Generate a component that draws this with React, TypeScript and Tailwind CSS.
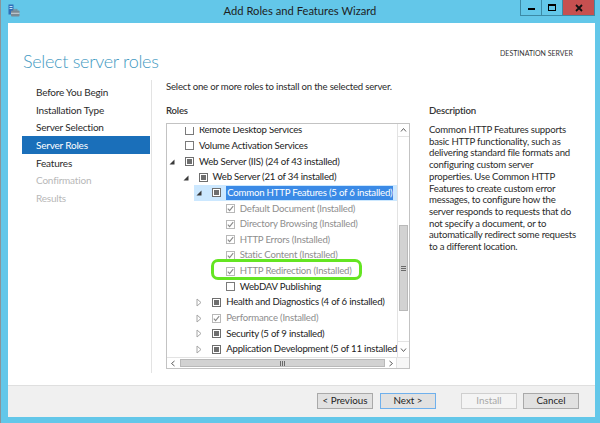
import React from "react";

type Row = {
  text: string;
  level: 0 | 1 | 2 | 3;
  exp: "open" | "closed" | null;
  check: "empty" | "partial" | "checked";
  gray?: boolean;
  selected?: boolean;
};

const rows: Row[] = [
  { text: "Remote Desktop Services", level: 0, exp: null, check: "empty" },
  { text: "Volume Activation Services", level: 0, exp: null, check: "empty" },
  { text: "Web Server (IIS) (24 of 43 installed)", level: 0, exp: "open", check: "partial" },
  { text: "Web Server (21 of 34 installed)", level: 1, exp: "open", check: "partial" },
  { text: "Common HTTP Features (5 of 6 installed)", level: 2, exp: "open", check: "partial", selected: true },
  { text: "Default Document (Installed)", level: 3, exp: null, check: "checked", gray: true },
  { text: "Directory Browsing (Installed)", level: 3, exp: null, check: "checked", gray: true },
  { text: "HTTP Errors (Installed)", level: 3, exp: null, check: "checked", gray: true },
  { text: "Static Content (Installed)", level: 3, exp: null, check: "checked", gray: true },
  { text: "HTTP Redirection (Installed)", level: 3, exp: null, check: "checked", gray: true },
  { text: "WebDAV Publishing", level: 3, exp: null, check: "empty" },
  { text: "Health and Diagnostics (4 of 6 installed)", level: 2, exp: "closed", check: "partial" },
  { text: "Performance (Installed)", level: 2, exp: "closed", check: "checked", gray: true },
  { text: "Security (5 of 9 installed)", level: 2, exp: "closed", check: "partial" },
  { text: "Application Development (5 of 11 installed)", level: 2, exp: "closed", check: "partial" },
];

const indent = ["pl-[0px]", "pl-[13.6px]", "pl-[27.2px]", "pl-[40.8px]"];

const navItems: { label: string; state: "normal" | "active" | "disabled" }[] = [
  { label: "Before You Begin", state: "normal" },
  { label: "Installation Type", state: "normal" },
  { label: "Server Selection", state: "normal" },
  { label: "Server Roles", state: "active" },
  { label: "Features", state: "normal" },
  { label: "Confirmation", state: "disabled" },
  { label: "Results", state: "disabled" },
];

const descLines = [
  "Common HTTP Features supports",
  "basic HTTP functionality, such as",
  "delivering standard file formats and",
  "configuring custom server",
  "properties. Use Common HTTP",
  "Features to create custom error",
  "messages, to configure how the",
  "server responds to requests that do",
  "not specify a document, or to",
  "automatically redirect some requests",
  "to a different location.",
];

function Expander({ exp }: { exp: Row["exp"] }) {
  return (
    <div className="w-[18px] h-full flex items-center">
      {exp === "open" && (
        <svg width="6" height="6" viewBox="0 0 6 6" className="ml-[2px] mt-[1px]">
          <polygon points="5.5,0.5 5.5,5.5 0.5,5.5" fill="#3a3a3a" />
        </svg>
      )}
      {exp === "closed" && (
        <svg width="6" height="9" viewBox="0 0 6 9" className="ml-[2px]">
          <polygon points="1,1 5,4.5 1,8" fill="none" stroke="#a6a6a6" strokeWidth="1" />
        </svg>
      )}
    </div>
  );
}

function Check({ check }: { check: Row["check"] }) {
  if (check === "empty") {
    return <div className="w-[9px] h-[9px] shrink-0 border border-[#7a7a7a] bg-white" />;
  }
  if (check === "partial") {
    return (
      <div className="w-[9px] h-[9px] shrink-0 border border-[#6e6e6e] bg-white flex items-center justify-center">
        <div className="w-[5px] h-[5px] bg-[#6e6e6e]" />
      </div>
    );
  }
  return (
    <div className="w-[9px] h-[9px] shrink-0 border border-[#b8b8b8] bg-white flex items-center justify-center">
      <svg width="7" height="7" viewBox="0 0 7 7">
        <polyline points="0.8,3.6 2.6,5.6 6.2,1.2" fill="none" stroke="#8a8a8a" strokeWidth="1.1" />
      </svg>
    </div>
  );
}

function Chevron({ dir }: { dir: "up" | "down" | "left" | "right" }) {
  const pts =
    dir === "up"
      ? "1,4.5 3.5,1.5 6,4.5"
      : dir === "down"
      ? "1,1.5 3.5,4.5 6,1.5"
      : dir === "left"
      ? "4.5,1 1.5,3.5 4.5,6"
      : "1.5,1 4.5,3.5 1.5,6";
  const w = dir === "up" || dir === "down" ? 7 : 6;
  const h = dir === "up" || dir === "down" ? 6 : 7;
  return (
    <svg width={w} height={h} viewBox={`0 0 ${w} ${h}`}>
      <polyline points={pts} fill="none" stroke="#606060" strokeWidth="1" />
    </svg>
  );
}

function WinBtn({ children, wide, red }: { children: React.ReactNode; wide?: boolean; red?: boolean }) {
  return (
    <div
      className={
        "h-[16px] flex items-center justify-center border-b border-l border-[#3c8aa6] " +
        (wide ? "w-[33px] border-r " : "w-[21px] ") +
        (red ? "bg-[#c75050]" : "bg-[#63c7e9]")
      }
    >
      {children}
    </div>
  );
}

function Button({ label, variant }: { label: string; variant: "normal" | "focus" | "disabled" }) {
  const cls =
    variant === "disabled"
      ? "bg-[#f4f4f4] border-[#cfcfcf] text-[#a8a8a8]"
      : variant === "focus"
      ? "bg-[#e1e1e1] border-[#6fb0ec] text-[#1e1e1e]"
      : "bg-[#e1e1e1] border-[#a9a9a9] text-[#1e1e1e]";
  return (
    <div className={"w-[56px] h-[16px] border flex items-center justify-center text-[9.8px] leading-none " + cls}>
      {label}
    </div>
  );
}

export default function App() {
  return (
    <div className="w-[600px] h-[423px] flex bg-[#63c7e9] overflow-hidden font-['Lato','Noto_Sans',sans-serif] select-none">
      <div className="w-[1px] bg-[#8a9499]" />
      <div className="flex-1 flex flex-col">
        {/* Title bar */}
        <div className="h-[23px] grid grid-cols-[79px_1fr_80px]">
          <div className="pl-[7px] pt-[4px]">
            <svg width="12" height="13" viewBox="0 0 12 13">
              <rect x="0.5" y="0.5" width="5" height="10" fill="#2f6fb8" />
              <rect x="1.5" y="2" width="3" height="1" fill="#bfe0f5" />
              <rect x="1.5" y="4" width="3" height="1" fill="#bfe0f5" />
              <rect x="3" y="6.5" width="8.5" height="6" rx="0.8" fill="#7b8a94" />
              <rect x="5.5" y="5.3" width="3.5" height="1.4" fill="none" stroke="#7b8a94" strokeWidth="0.8" />
              <rect x="3" y="8.8" width="8.5" height="0.9" fill="#d6dde2" />
            </svg>
          </div>
          <div className="flex items-center justify-center text-[11.2px] text-[#1e1e1e] leading-none pb-[1px]">
            Add Roles and Features Wizard
          </div>
          <div className="flex justify-end items-start pr-[5px]">
            <WinBtn>
              <div className="w-[7px] h-[2px] bg-black mt-[3px]" />
            </WinBtn>
            <WinBtn>
              <div className="w-[8px] h-[7px] border border-black border-t-2" />
            </WinBtn>
            <WinBtn wide red>
              <svg width="8" height="8" viewBox="0 0 8 8">
                <path d="M1 1 L7 7 M7 1 L1 7" stroke="#111" strokeWidth="1.8" />
              </svg>
            </WinBtn>
          </div>
        </div>

        {/* Body */}
        <div className="flex-1 flex pl-[7px] pr-[5px] pb-[6px]">
          <div className="flex-1 flex flex-col bg-white">
            {/* Header */}
            <div className="h-[57px] flex justify-between items-start">
              <div className="pl-[15px] pt-[26px] text-[18px] leading-[24px] font-light tracking-[-0.3px] text-[#449ac2]">
                Select server roles
              </div>
              <div className="pr-[22px] pt-[25px] text-[7px] leading-[10px] text-[#333]">
                DESTINATION SERVER
              </div>
            </div>

            {/* Main */}
            <div className="flex-1 flex">
              {/* Nav */}
              <div className="w-[144px] border-r border-[#e3e3e3] pt-[3px] mb-[12px]">
                {navItems.map((n) => (
                  <div
                    key={n.label}
                    className={
                      "ml-[14px] w-[128px] h-[17.7px] flex items-center pl-[14px] text-[10px] tracking-[-0.2px] leading-none " +
                      (n.state === "active"
                        ? "bg-[#1a6fba] text-white"
                        : n.state === "disabled"
                        ? "text-[#b8b8b8]"
                        : "text-[#2b2b2b]")
                    }
                  >
                    {n.label}
                  </div>
                ))}
              </div>

              {/* Content */}
              <div className="flex-1 pl-[14px] pt-[1px] text-[9.6px] tracking-[-0.2px]">
                <div className="leading-[12px] text-[#2b2b2b]">
                  Select one or more roles to install on the selected server.
                </div>
                <div className="flex">
                  {/* Roles column */}
                  <div className="w-[244px]">
                    <div className="mt-[12px] leading-[12px] font-semibold text-[#333]">Roles</div>
                    <div className="mt-[6px] h-[246px] border border-[#c3c3c3] flex flex-col bg-white">
                      <div className="flex-1 flex min-h-0">
                        <div className="flex-1 relative overflow-hidden mt-[2.5px]">
                          <div className="-mt-[4px]">
                            {rows.map((r) => (
                              <div key={r.text} className={"h-[15.65px] flex " + indent[r.level]}>
                                <div className={"flex-1 flex items-center " + (r.selected ? "bg-[#cce8ff]" : "")}>
                                  <Expander exp={r.exp} />
                                  <Check check={r.check} />
                                  <span
                                    className={
                                      "ml-[5px] whitespace-nowrap leading-[14px] " +
                                      (r.selected
                                        ? "bg-[#3b8ae6] text-white pl-[1px] pr-[1px]"
                                        : r.gray
                                        ? "text-[#8e8e8e]"
                                        : "text-[#222]")
                                    }
                                  >
                                    {r.text}
                                  </span>
                                </div>
                              </div>
                            ))}
                          </div>
                          {/* annotation highlight */}
                          <div className="absolute left-[44px] top-[132.5px] w-[151px] h-[21px] border-[3px] border-[#64e522] rounded-[7px]" />
                        </div>
                        {/* Vertical scrollbar */}
                        <div className="w-[12px] border-l border-[#e3e3e3] flex flex-col">
                          <div className="h-[13px] flex items-center justify-center border-b border-[#e3e3e3]">
                            <Chevron dir="up" />
                          </div>
                          <div className="flex-1 px-[1px]">
                            <div className="mt-[88px] h-[86px] bg-[#d2d2d2] border border-[#b9b9b9] flex flex-col items-center justify-center gap-[1px]">
                              <div className="w-[5px] h-[1px] bg-[#6a6a6a]" />
                              <div className="w-[5px] h-[1px] bg-[#6a6a6a]" />
                              <div className="w-[5px] h-[1px] bg-[#6a6a6a]" />
                            </div>
                          </div>
                          <div className="h-[16px] flex items-center justify-center border-t border-[#e3e3e3]">
                            <Chevron dir="down" />
                          </div>
                        </div>
                      </div>
                      {/* Horizontal scrollbar */}
                      <div className="h-[11px] flex border-t border-[#e3e3e3]">
                        <div className="w-[12px] flex items-center justify-center">
                          <Chevron dir="left" />
                        </div>
                        <div className="flex-1 py-[1px] pl-[1px]">
                          <div className="h-full bg-[#d2d2d2] border border-[#b9b9b9] flex items-center justify-center gap-[1px]">
                            <div className="w-[1px] h-[5px] bg-[#6a6a6a]" />
                            <div className="w-[1px] h-[5px] bg-[#6a6a6a]" />
                            <div className="w-[1px] h-[5px] bg-[#6a6a6a]" />
                          </div>
                        </div>
                        <div className="w-[11px] flex items-center justify-center">
                          <Chevron dir="right" />
                        </div>
                        <div className="w-[13px] border-l border-[#e3e3e3] bg-[#f7f7f7]" />
                      </div>
                    </div>
                  </div>

                  {/* Description column */}
                  <div className="ml-[19px] w-[150px]">
                    <div className="mt-[12px] leading-[12px] font-semibold text-[#333]">Description</div>
                    <div className="mt-[7px] leading-[11.7px] text-[#2b2b2b]">
                      {descLines.map((l) => (
                        <div key={l} className="whitespace-nowrap">
                          {l}
                        </div>
                      ))}
                    </div>
                  </div>
                </div>
              </div>
            </div>

            {/* Footer */}
            <div className="h-[32px] border-t border-[#dfdfdf] bg-[#f0f0f0] flex justify-end items-start pt-[7px] pr-[16px]">
              <Button label="< Previous" variant="normal" />
              <div className="ml-[7px]">
                <Button label="Next >" variant="focus" />
              </div>
              <div className="ml-[25px]">
                <Button label="Install" variant="disabled" />
              </div>
              <div className="ml-[6px]">
                <Button label="Cancel" variant="normal" />
              </div>
            </div>
          </div>
        </div>
      </div>
    </div>
  );
}
